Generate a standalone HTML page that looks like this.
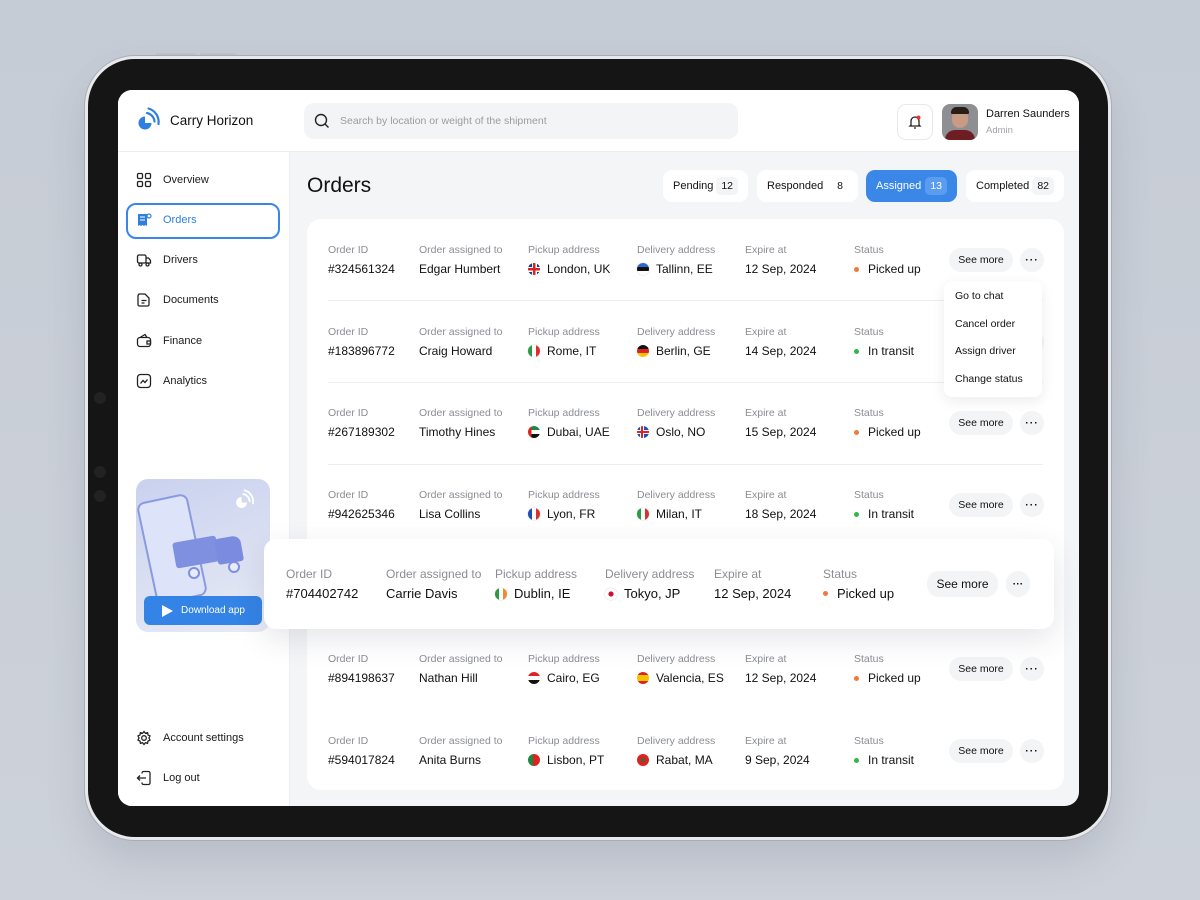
<!DOCTYPE html>
<html><head><meta charset="utf-8"><style>
*{box-sizing:border-box;margin:0;padding:0}
body{width:1200px;height:900px;overflow:hidden;background:linear-gradient(180deg,#c6ccd5,#cdd2da);font-family:"Liberation Sans",sans-serif;color:#111;position:relative}
.abs{position:absolute}
.rim{left:85px;top:56px;width:1026px;height:784px;border-radius:50px;background:#e8e9ec;box-shadow:0 0 0 1px #a9adb4, 0 20px 40px rgba(60,70,90,.15)}
.bez{left:88px;top:59px;width:1020px;height:778px;border-radius:47px;background:#151515}
.screen{left:118px;top:90px;width:961px;height:716px;border-radius:14px;background:#f3f5f7;overflow:hidden}
.hdr{left:0;top:0;width:961px;height:62px;background:#fff;border-bottom:1px solid #eceef1}
.side{left:0;top:62px;width:172px;height:654px;background:#fff;border-right:1px solid #eceef1}
.nav{position:absolute;left:18px;font-size:11px;color:#1a1a1a;display:flex;align-items:center;gap:11px}
.nav svg{width:16px;height:16px}
.lbl{font-size:10.5px;color:#8a8d93;position:absolute}
.val{font-size:12px;color:#111;position:absolute;display:flex;align-items:center;gap:7px}
.flag{width:12px;height:12px;border-radius:50%;display:inline-block;flex:none}
.dot{width:5px;height:5px;border-radius:50%;display:inline-block;margin-right:2px}
.btn{position:absolute;background:#f3f4f6;border-radius:12px;font-size:10.5px;display:flex;align-items:center;justify-content:center}
.tab{position:absolute;top:80px;height:32px;background:#fff;border-radius:9px;font-size:11px;display:flex;align-items:center;padding:0 10px;justify-content:space-between}
.tab b{font-weight:normal;background:#f3f4f6;border-radius:5px;padding:3px 5px;font-size:10.5px}
.div{position:absolute;left:21px;width:715px;height:1px;background:#eceef1}
.uk{background:linear-gradient(#d22,#d22) center/100% 2.5px no-repeat,linear-gradient(#d22,#d22) center/2.5px 100% no-repeat,linear-gradient(#fff,#fff) center/100% 5px no-repeat,linear-gradient(#fff,#fff) center/5px 100% no-repeat,#1d3a8a}
.ee{background:linear-gradient(#2a6bd1 33%,#111 33% 66%,#fff 66%);box-shadow:0 0 0 .5px #ddd}
.it{background:linear-gradient(90deg,#2a9a44 33%,#fff 33% 66%,#d8312f 66%);box-shadow:0 0 0 .5px #ddd}
.de{background:linear-gradient(#111 33%,#d22 33% 66%,#f5c400 66%)}
.ae{background:linear-gradient(90deg,#d22 30%,transparent 30%),linear-gradient(#1a8a3e 33%,#fff 33% 66%,#111 66%)}
.no{background:linear-gradient(#d22,#d22) center/100% 2px no-repeat,linear-gradient(#d22,#d22) 40% 50%/2px 100% no-repeat,linear-gradient(#fff,#fff) center/100% 4px no-repeat,linear-gradient(#fff,#fff) 40% 50%/4px 100% no-repeat,#1f4fb5}
.fr{background:linear-gradient(90deg,#1f4fb5 33%,#fff 33% 66%,#d8312f 66%);box-shadow:0 0 0 .5px #ddd}
.eg{background:linear-gradient(#d22 33%,#fff 33% 66%,#111 66%)}
.es{background:linear-gradient(#d22 25%,#f5c400 25% 75%,#d22 75%)}
.pt{background:linear-gradient(90deg,#1a8a3e 40%,#d22 40%)}
.ma{background:radial-gradient(circle,#1a7a3e 20%,#d22 24%)}
.ie{background:linear-gradient(90deg,#2a9a44 33%,#fff 33% 66%,#f08a2a 66%);box-shadow:0 0 0 .5px #ddd}
.jp{background:radial-gradient(circle,#d0102a 28%,#fff 32%);box-shadow:0 0 0 .5px #ddd}
</style></head><body>
<div class="abs" style="left:156px;top:53px;width:40px;height:4px;background:#bfc3c9;border-radius:2px"></div>
<div class="abs" style="left:200px;top:53px;width:36px;height:4px;background:#bfc3c9;border-radius:2px"></div>
<div class="abs rim"></div>
<div class="abs bez"></div>
<div class="abs" style="left:94px;top:392px;width:12px;height:12px;border-radius:50%;background:#222"></div>
<div class="abs" style="left:94px;top:466px;width:12px;height:12px;border-radius:50%;background:#222"></div>
<div class="abs" style="left:94px;top:490px;width:12px;height:12px;border-radius:50%;background:#222"></div>
<div class="abs screen">
 <div class="abs hdr">
  <svg class="abs" style="left:18px;top:16px" width="26" height="28" viewBox="0 0 26 28"><path d="M9 17 L9 10.5 A6.5 6.5 0 1 0 15.5 17 Z" fill="#2f7fe0"/><path d="M11 7 A9.5 9.5 0 0 1 18.5 15.5" stroke="#2f7fe0" stroke-width="2.2" fill="none" stroke-linecap="round"/><path d="M12.5 2.5 A14 14 0 0 1 22.5 18" stroke="#2f7fe0" stroke-width="2.2" fill="none" stroke-linecap="round"/></svg>
  <div class="abs" style="left:52px;top:23px;font-size:13.5px">Carry Horizon</div>
  <div class="abs" style="left:186px;top:13px;width:434px;height:36px;background:#f3f4f6;border-radius:10px"></div>
  <svg class="abs" style="left:196px;top:23px" width="16" height="16" viewBox="0 0 16 16"><circle cx="7" cy="7" r="5.5" stroke="#222" stroke-width="1.4" fill="none"/><path d="M11 11l3.5 3.5" stroke="#222" stroke-width="1.4"/></svg>
  <div class="abs" style="left:222px;top:25px;font-size:10.5px;color:#9a9ca1">Search by location or weight of the shipment</div>
  <div class="abs" style="left:779px;top:14px;width:36px;height:36px;border:1px solid #e6e8eb;border-radius:9px"></div>
  <svg class="abs" style="left:789px;top:24px" width="16" height="16" viewBox="0 0 16 16"><path d="M4 11V7a4 4 0 0 1 8 0v4l1 1H3z M7 14h2" stroke="#222" stroke-width="1.3" fill="none"/><circle cx="11.5" cy="3.5" r="2" fill="#e33"/></svg>
  <div class="abs" style="left:824px;top:14px;width:36px;height:36px;border-radius:8px;background:#8e8f93;overflow:hidden"><div style="position:absolute;left:10px;top:5px;width:16px;height:19px;border-radius:8px;background:#c99a84"></div><div style="position:absolute;left:9px;top:3px;width:18px;height:7px;border-radius:8px 8px 2px 2px;background:#2a1d18"></div><div style="position:absolute;left:3px;top:26px;width:30px;height:14px;border-radius:10px 10px 0 0;background:#6e1e22"></div></div>
  <div class="abs" style="left:868px;top:18px;font-size:11px">Darren Saunders</div>
  <div class="abs" style="left:868px;top:35px;font-size:9.5px;color:#a0a3a8">Admin</div>
 </div>
 <div class="abs side">
  <div class="nav" style="top:20px"><svg viewBox="0 0 16 16" fill="none" stroke="#222" stroke-width="1.3"><rect x="1.5" y="1.5" width="5" height="5" rx="1.2"/><rect x="9.5" y="1.5" width="5" height="5" rx="1.2"/><rect x="1.5" y="9.5" width="5" height="5" rx="1.2"/><rect x="9.5" y="9.5" width="5" height="5" rx="1.2"/></svg>Overview</div>
  <div class="abs" style="left:8px;top:51px;width:154px;height:36px;border:2px solid #3a86e8;border-radius:10px"></div>
  <div class="nav" style="top:60px;color:#2f7fe0"><svg viewBox="0 0 16 16"><path d="M2 2h9v12l-1.5-1-1.5 1-1.5-1-1.5 1-1.5-1L2 14z" fill="#2f7fe0"/><path d="M4 5h5M4 8h5" stroke="#fff" stroke-width="1"/><circle cx="13" cy="4" r="2" fill="none" stroke="#2f7fe0" stroke-width="1.2"/></svg>Orders</div>
  <div class="nav" style="top:100px"><svg viewBox="0 0 16 16" fill="none" stroke="#222" stroke-width="1.3"><rect x="1.5" y="3" width="8.5" height="8" rx="1.5"/><path d="M10 6h2.5l2 2.5V11H10"/><circle cx="4.5" cy="12.5" r="1.5"/><circle cx="11.5" cy="12.5" r="1.5"/></svg>Drivers</div>
  <div class="nav" style="top:140px"><svg viewBox="0 0 16 16" fill="none" stroke="#222" stroke-width="1.3"><path d="M3 2h6l4 4v6.5A1.5 1.5 0 0 1 11.5 14h-8A1.5 1.5 0 0 1 2 12.5V3.5z M5.5 8.5h5M5.5 11h3"/></svg>Documents</div>
  <div class="nav" style="top:181px"><svg viewBox="0 0 16 16" fill="none" stroke="#222" stroke-width="1.3"><rect x="1.5" y="4.5" width="13" height="9" rx="2.5"/><path d="M4 4.5l5-3 2 3M11 8h3.5v3H11z"/></svg>Finance</div>
  <div class="nav" style="top:221px"><svg viewBox="0 0 16 16" fill="none" stroke="#222" stroke-width="1.3"><rect x="1.5" y="1.5" width="13" height="13" rx="3"/><path d="M4.5 10.5l2.5-3 2 2 2.5-3"/></svg>Analytics</div>
  <div class="abs" style="left:18px;top:327px;width:134px;height:153px;border-radius:12px;background:linear-gradient(160deg,#c9d1ee,#e8ebf5)">
   <div style="position:absolute;left:10px;top:18px;width:52px;height:104px;border:2px solid #8a9ae0;border-radius:8px;background:#dde3f8;transform:rotate(-12deg)"></div>
   <div style="position:absolute;left:38px;top:60px;width:44px;height:26px;background:#8090e0;border-radius:3px;transform:rotate(-10deg)"></div>
   <div style="position:absolute;left:80px;top:58px;width:26px;height:26px;background:#7b8be0;border-radius:4px 8px 3px 3px;transform:rotate(-10deg)"></div>
   <div style="position:absolute;left:52px;top:88px;width:12px;height:12px;background:#e8ecf8;border:2px solid #8090e0;border-radius:50%"></div>
   <div style="position:absolute;left:92px;top:82px;width:12px;height:12px;background:#e8ecf8;border:2px solid #8090e0;border-radius:50%"></div>
   <svg style="position:absolute;left:98px;top:9px" width="22" height="24" viewBox="0 0 26 28"><path d="M9 17 L9 10.5 A6.5 6.5 0 1 0 15.5 17 Z" fill="#fff"/><path d="M11 7 A9.5 9.5 0 0 1 18.5 15.5" stroke="#fff" stroke-width="2.2" fill="none" stroke-linecap="round"/><path d="M12.5 2.5 A14 14 0 0 1 22.5 18" stroke="#fff" stroke-width="2.2" fill="none" stroke-linecap="round"/></svg>
   <div style="position:absolute;left:8px;top:117px;width:118px;height:29px;background:#3483e6;border-radius:6px;color:#fff;font-size:10px;display:flex;align-items:center;justify-content:center;gap:7px"><svg width="13" height="14" viewBox="0 0 13 14"><path d="M1 1l11 6-11 6z" fill="#fff"/></svg>Download app</div>
  </div>
  <div class="nav" style="top:578px"><svg viewBox="0 0 16 16" fill="none" stroke="#222" stroke-width="1.3"><circle cx="8" cy="8" r="2.3"/><path d="M8 1.5l1.4 1.8 2.2-.6.4 2.2 2 1-1 2.1 1 2.1-2 1-.4 2.2-2.2-.6L8 14.5l-1.4-1.8-2.2.6-.4-2.2-2-1 1-2.1-1-2.1 2-1 .4-2.2 2.2.6z"/></svg>Account settings</div>
  <div class="nav" style="top:618px"><svg viewBox="0 0 16 16" fill="none" stroke="#222" stroke-width="1.3"><path d="M6 3.5V3a1.5 1.5 0 0 1 1.5-1.5h5A1.5 1.5 0 0 1 14 3v10a1.5 1.5 0 0 1-1.5 1.5h-5A1.5 1.5 0 0 1 6 13v-.5M10 8H1.5M4 5.5L1.5 8 4 10.5"/></svg>Log out</div>
 </div>
 <div class="abs" style="left:189px;top:84px;font-size:21px">Orders</div>
 <div class="tab" style="left:545px;width:85px">Pending<b>12</b></div>
 <div class="tab" style="left:639px;width:101px">Responded<b style="background:none">8</b></div>
 <div class="tab" style="left:748px;width:91px;background:#3b87e8;color:#fff">Assigned<b style="background:#5a9cf0;color:#fff">13</b></div>
 <div class="tab" style="left:848px;width:98px">Completed<b>82</b></div>
 <div class="abs" style="left:189px;top:129px;width:757px;height:571px;background:#fff;border-radius:14px">
  <div class="div" style="top:81px"></div><div class="div" style="top:163px"></div><div class="div" style="top:245px"></div>
 </div>
</div>
<div id="r"></div>
<script>
const rows=[
[249,"#324561324","Edgar Humbert","uk","London, UK","ee","Tallinn, EE","12 Sep, 2024","o","Picked up"],
[331,"#183896772","Craig Howard","it","Rome, IT","de","Berlin, GE","14 Sep, 2024","g","In transit"],
[412,"#267189302","Timothy Hines","ae","Dubai, UAE","no","Oslo, NO","15 Sep, 2024","o","Picked up"],
[494,"#942625346","Lisa Collins","fr","Lyon, FR","it","Milan, IT","18 Sep, 2024","g","In transit"],
[658,"#894198637","Nathan Hill","eg","Cairo, EG","es","Valencia, ES","12 Sep, 2024","o","Picked up"],
[740,"#594017824","Anita Burns","pt","Lisbon, PT","ma","Rabat, MA","9 Sep, 2024","g","In transit"]];
let h="";
function row(r,xs,dy,fs,lf,bx,bw,dx){
 const [y,id,n,f1,p,f2,d,e,s,st]=r;const c=s=="o"?"#f07a3a":"#2fb84a";
 const L=["Order ID","Order assigned to","Pickup address","Delivery address","Expire at","Status"];
 L.forEach((t,i)=>h+=`<div class="lbl" style="left:${xs[i]}px;top:${y-5}px;font-size:${lf}px">${t}</div>`);
 const V=[id,n,`<i class="flag ${f1}"></i>${p}`,`<i class="flag ${f2}"></i>${d}`,e,`<i class="dot" style="background:${c}"></i>${st}`];
 V.forEach((t,i)=>h+=`<div class="val" style="left:${xs[i]}px;top:${y+dy}px;font-size:${fs}px">${t}</div>`);
 if(bx){h+=`<div class="btn" style="left:${bx}px;top:${y-1}px;width:${bw}px;height:24px">See more</div>`;
 h+=`<div class="btn" style="left:${dx}px;top:${y-1}px;width:24px;height:24px;font-weight:bold;letter-spacing:1px">···</div>`;}
}
const xs=[328,419,528,637,745,854];
rows.forEach(r=>row(r,xs,13,12,10.5,949,64,1020));
h+=`<div class="abs" style="left:944px;top:281px;width:98px;height:116px;background:#fff;border-radius:8px;box-shadow:0 4px 14px rgba(0,0,0,.08)"></div>`;
["Go to chat","Cancel order","Assign driver","Change status"].forEach((t,i)=>h+=`<div class="abs" style="left:955px;top:${290+i*27.5}px;font-size:10.5px">${t}</div>`);
h+=`<div class="abs" style="left:264px;top:539px;width:790px;height:90px;background:#fff;border-radius:12px;box-shadow:0 10px 30px rgba(40,50,70,.12)"></div>`;
row([572,"#704402742","Carrie Davis","ie","Dublin, IE","jp","Tokyo, JP","12 Sep, 2024","o","Picked up"],[286,386,495,605,714,823],14,13,12,null);
h+=`<div class="btn" style="left:927px;top:571px;width:71px;height:26px;font-size:12px">See more</div><div class="btn" style="left:1006px;top:571px;width:24px;height:26px;font-weight:bold">···</div>`;
document.getElementById("r").innerHTML=h;
</script>
</body></html>
